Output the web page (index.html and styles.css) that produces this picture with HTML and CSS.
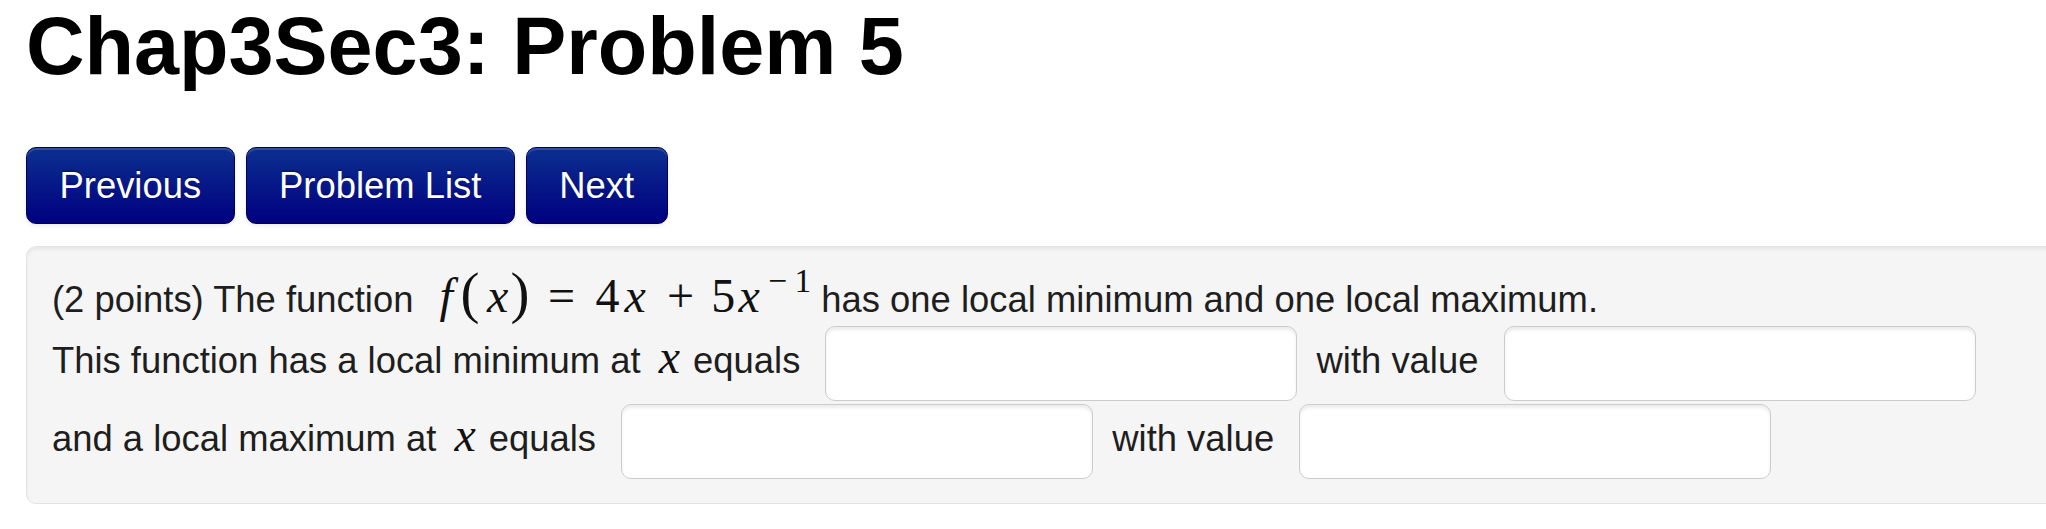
FILE: index.html
```html
<!DOCTYPE html>
<html lang="en">
<head>
<meta charset="utf-8">
<title>Chap3Sec3: Problem 5</title>
<link rel="stylesheet" href="styles.css">
</head>
<body>
<div class="page">
  <h1 class="title">Chap3Sec3: Problem 5</h1>
  <div class="nav">
    <a class="btn" href="#">Previous</a>
    <a class="btn" href="#">Problem List</a>
    <a class="btn" href="#">Next</a>
  </div>
  <div class="well">
    <div class="line1">(2 points) The function <span class="math"><i class="t m-f">f</i><span class="t paren m-lp">(</span><i class="t m-x1">x</i><span class="t paren m-rp">)</span><span class="t m-eq">=</span><span class="t m-4">4</span><i class="t m-x2">x</i><span class="t m-plus">+</span><span class="t m-5">5</span><i class="t m-x3">x</i><span class="sup"><span class="t m-minus">&#8722;</span><span class="t m-1">1</span></span></span> has one local minimum and one local maximum.</div>
    <div class="row">This function has a local minimum at <span class="math"><i class="t mx">x</i></span> equals <input class="ans" type="text"> with value <input class="ans" type="text"></div>
    <div class="row">and a local maximum at <span class="math"><i class="t mx">x</i></span> equals <input class="ans" type="text"> with value <input class="ans" type="text"></div>
  </div>
</div>
</body>
</html>
```
FILE: styles.css
```css
html, body {
  margin: 0;
  padding: 0;
  background: #ffffff;
}
body {
  overflow: hidden;
  font-family: "Liberation Sans", Arial, sans-serif;
  color: #222;
}
.page {
  padding-left: 26px;
}
.title {
  margin: 0 0 54px 0;
  font-size: 81px;
  line-height: 93px;
  font-weight: bold;
  color: #000;
}
.nav {
  display: flex;
  gap: 11px;
  margin-bottom: 22px;
}
.btn {
  display: block;
  box-sizing: border-box;
  height: 77px;
  padding: 11.5px 32.5px;
  font-size: 36.4px;
  line-height: 52px;
  color: #fff;
  text-decoration: none;
  text-shadow: 0 -2px 0 rgba(0,0,0,0.25);
  background: linear-gradient(to bottom, #0c2f90 0%, #00007f 100%);
  border: 1px solid #00005a;
  border-radius: 10px;
  box-shadow: inset 0 2px 0 rgba(255,255,255,0.15), 0 2px 4px rgba(0,0,0,0.08);
}
.well {
  margin-right: -80px;
  background: #f5f5f5;
  border: 1px solid #e3e3e3;
  border-radius: 10px;
  box-shadow: inset 0 3px 3px rgba(0,0,0,0.05);
  padding: 25px 25px 24px 25px;
  font-size: 36.4px;
  color: #1e1e1e;
}
.line1 {
  height: 54px;
  line-height: 56px;
  white-space: nowrap;
}
.row {
  line-height: 52px;
  white-space: nowrap;
}
.row + .row {
  margin-top: 3px;
}
.math {
  font-family: "Liberation Serif", "Times New Roman", serif;
  font-size: 48px;
  line-height: 1;
  color: #111;
}
.math i {
  font-style: italic;
}
.paren {
  font-size: 57px;
  line-height: 0;
}
.sup {
  font-size: 33.6px;
  line-height: 0;
  vertical-align: 20px;
}
.m-f { margin-left: 15.9px; }
.m-lp { margin-left: 7.8px; }
.m-x1 { margin-left: 7.4px; }
.m-rp { margin-left: 2.3px; }
.m-eq { margin-left: 18.5px; }
.m-4 { margin-left: 20.3px; }
.m-x2 { margin-left: 5px; }
.m-plus { margin-left: 21.3px; }
.m-5 { margin-left: 17.1px; }
.m-x3 { margin-left: 3.2px; }
.m-minus { margin-left: 8.8px; }
.m-1 { margin-left: 7px; }
.mx {
  margin-left: 8px;
  margin-right: 3px;
}
.ans {
  box-sizing: border-box;
  width: 472px;
  height: 75px;
  margin: 0 9px 0 15px;
  padding: 10px 15px;
  vertical-align: middle;
  background: #fff;
  border: 1px solid #cccccc;
  border-radius: 10px;
  box-shadow: inset 0 3px 3px rgba(0,0,0,0.075);
  font-family: "Liberation Sans", Arial, sans-serif;
  font-size: 36px;
  color: #555;
  outline: none;
}
```
